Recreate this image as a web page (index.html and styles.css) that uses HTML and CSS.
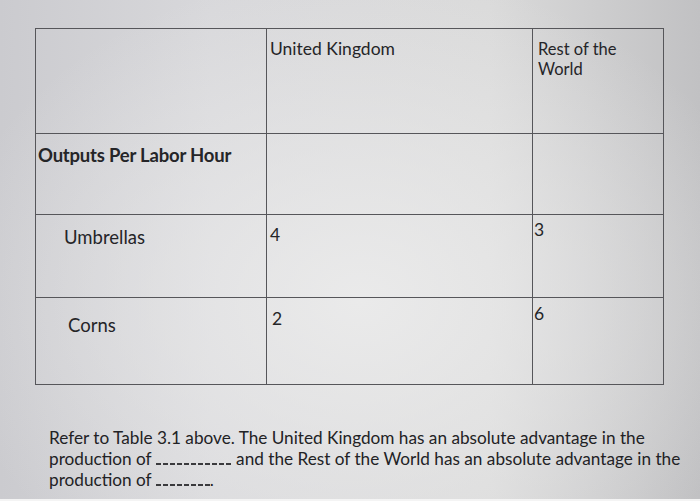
FILE: index.html
```html
<!DOCTYPE html>
<html>
<head>
<meta charset="utf-8">
<link rel="stylesheet" href="styles.css">
</head>
<body>
<div class="page">
  <table class="data">
    <tr class="r-head">
      <td class="c1"></td>
      <td class="c2"><span class="t">United Kingdom</span></td>
      <td class="c3"><span class="t rest">Rest of the<br>World</span></td>
    </tr>
    <tr class="r-title">
      <td class="c1"><span class="t bold">Outputs Per Labor Hour</span></td>
      <td class="c2"></td>
      <td class="c3"></td>
    </tr>
    <tr class="r-umb">
      <td class="c1"><span class="t lab1">Umbrellas</span></td>
      <td class="c2"><span class="t n4">4</span></td>
      <td class="c3"><span class="t n3">3</span></td>
    </tr>
    <tr class="r-corn">
      <td class="c1"><span class="t lab2">Corns</span></td>
      <td class="c2"><span class="t n2">2</span></td>
      <td class="c3"><span class="t n6">6</span></td>
    </tr>
  </table>
  <p class="question">Refer to Table 3.1 above. The United Kingdom has an absolute advantage in the<br>production of <span class="blank b1"></span> and the Rest of the World has an absolute advantage in the<br>production of <span class="blank b2"></span>.</p>
</div>
<div class="edge"></div>
</body>
</html>
```

FILE: styles.css
```css
html, body {
  margin: 0;
  padding: 0;
  width: 700px;
  height: 501px;
  overflow: hidden;
}
body {
  font-family: Lato, "Open Sans", sans-serif;
  color: #252528;
  background:
    radial-gradient(ellipse 420px 330px at 360px 300px, rgba(236,236,236,0.9), rgba(236,236,236,0) 100%),
    linear-gradient(90deg, #cbcbcf 0%, #d8d8db 30%, #dadada 70%, #c1c1c3 100%);
  position: relative;
}
.page {
  padding: 28px 0 0 35px;
}
.data {
  border-collapse: collapse;
  width: 625px;
  table-layout: fixed;
}
.data td {
  border: 1.5px solid #56565a;
  vertical-align: top;
  padding: 0;
  font-size: 17.5px;
  line-height: 20px;
}
.c1 { width: 230px; }
.c2 { width: 265px; }
.c3 { width: 130px; }
.r-head td { height: 104px; }
.r-title td { height: 80px; }
.r-umb td { height: 82px; }
.r-corn td { height: 86px; }
.t { display: block; }
.r-head .c2 .t { padding: 10px 0 0 3px; }
.rest { padding: 10px 0 0 5px; font-size: 16.5px; }
.bold { font-weight: 700; font-size: 18.5px; padding: 11px 0 0 2px; letter-spacing: -0.2px; }
.lab1 { font-size: 18.5px; padding: 12px 0 0 28px; }
.n4 { padding: 10px 0 0 3px; }
.n3 { padding: 5px 0 0 1px; }
.lab2 { font-size: 18.5px; padding: 17px 0 0 32px; }
.n2 { padding: 11px 0 0 5px; }
.n6 { padding: 6px 0 0 1px; }
.question {
  margin: 42px 0 0 14px;
  font-size: 17.2px;
  line-height: 21px;
  color: #222225;
  white-space: nowrap;
}
.blank {
  display: inline-block;
  height: 2px;
  vertical-align: baseline;
  background: repeating-linear-gradient(90deg, #3a3a3d 0 5px, transparent 5px 7px);
}
.b1 { width: 76px; }
.b2 { width: 54px; }
.edge {
  position: absolute;
  left: 0;
  right: 0;
  bottom: 0;
  height: 2px;
  background: #f4f4f4;
}
```
